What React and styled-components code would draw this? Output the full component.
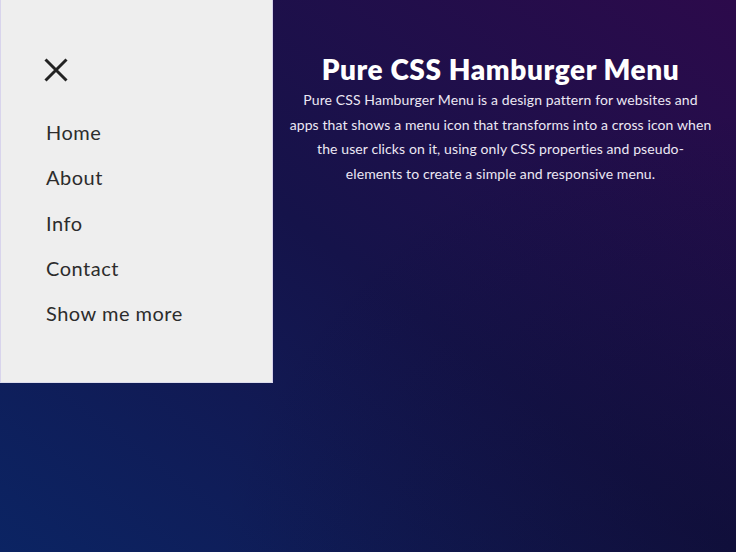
import React from "react";
import styled, { createGlobalStyle } from "styled-components";

const Global = createGlobalStyle`
  html, body { margin: 0; padding: 0; }
  body {
    width: 736px;
    height: 552px;
    overflow: hidden;
    font-family: "Lato", "Open Sans", sans-serif;
  }
  #root { height: 100%; }
`;

const Page = styled.div`
  width: 736px;
  height: 552px;
  display: flex;
  align-items: flex-start;
  background:
    radial-gradient(ellipse 70% 80% at 100% 100%, rgba(10, 10, 40, 0.45) 0%, rgba(10, 10, 40, 0) 100%),
    linear-gradient(to top right, #0b2463 0%, #15134a 50%, #2c0a4b 100%);
`;

const Drawer = styled.nav`
  flex: 0 0 273px;
  height: 383px;
  box-sizing: border-box;
  background: #eeeeee;
  border-left: 1px solid #d8d4ec;
  border-right: 1px solid #d6d0ea;
  border-bottom: 1px solid #dcdcec;
  display: flex;
  flex-direction: column;
  padding-left: 43px;
`;

const CloseButton = styled.button`
  width: 24px;
  height: 24px;
  margin-top: 58px;
  padding: 0;
  border: 0;
  background: none;
  display: flex;
  cursor: pointer;
`;

const MenuList = styled.ul`
  list-style: none;
  margin: 28px 0 0 2px;
  padding: 0;
  display: flex;
  flex-direction: column;
`;

const MenuItem = styled.li`
  font-size: 20px;
  line-height: 45.3px;
  color: #2c2c2c;
  letter-spacing: 0.5px;
`;

const Content = styled.main`
  flex: 0 0 423px;
  margin-left: 16px;
  padding-top: 50px;
  text-align: center;
  color: #ffffff;
`;

const Title = styled.h1`
  margin: 0;
  font-size: 28px;
  font-weight: 800;
  line-height: 38px;
  letter-spacing: 0.6px;
`;

const Description = styled.p`
  margin: 0;
  font-size: 14px;
  line-height: 24.5px;
  letter-spacing: 0.1px;
  color: #ece8f4;
`;

const items = ["Home", "About", "Info", "Contact", "Show me more"];

export default function App() {
  return (
    <>
      <Global />
      <Page>
        <Drawer>
          <CloseButton aria-label="Close menu">
            <svg width="24" height="24" viewBox="0 0 24 24">
              <path d="M1.5 1.5 L22.5 22.5 M22.5 1.5 L1.5 22.5" stroke="#222" strokeWidth="3" />
            </svg>
          </CloseButton>
          <MenuList>
            {items.map((t) => (
              <MenuItem key={t}>{t}</MenuItem>
            ))}
          </MenuList>
        </Drawer>
        <Content>
          <Title>Pure CSS Hamburger Menu</Title>
          <Description>
            Pure CSS Hamburger Menu is a design pattern for websites and apps that shows a menu icon
            that transforms into a cross icon when the user clicks on it, using only CSS properties and
            pseudo-elements to create a simple and responsive menu.
          </Description>
        </Content>
      </Page>
    </>
  );
}
